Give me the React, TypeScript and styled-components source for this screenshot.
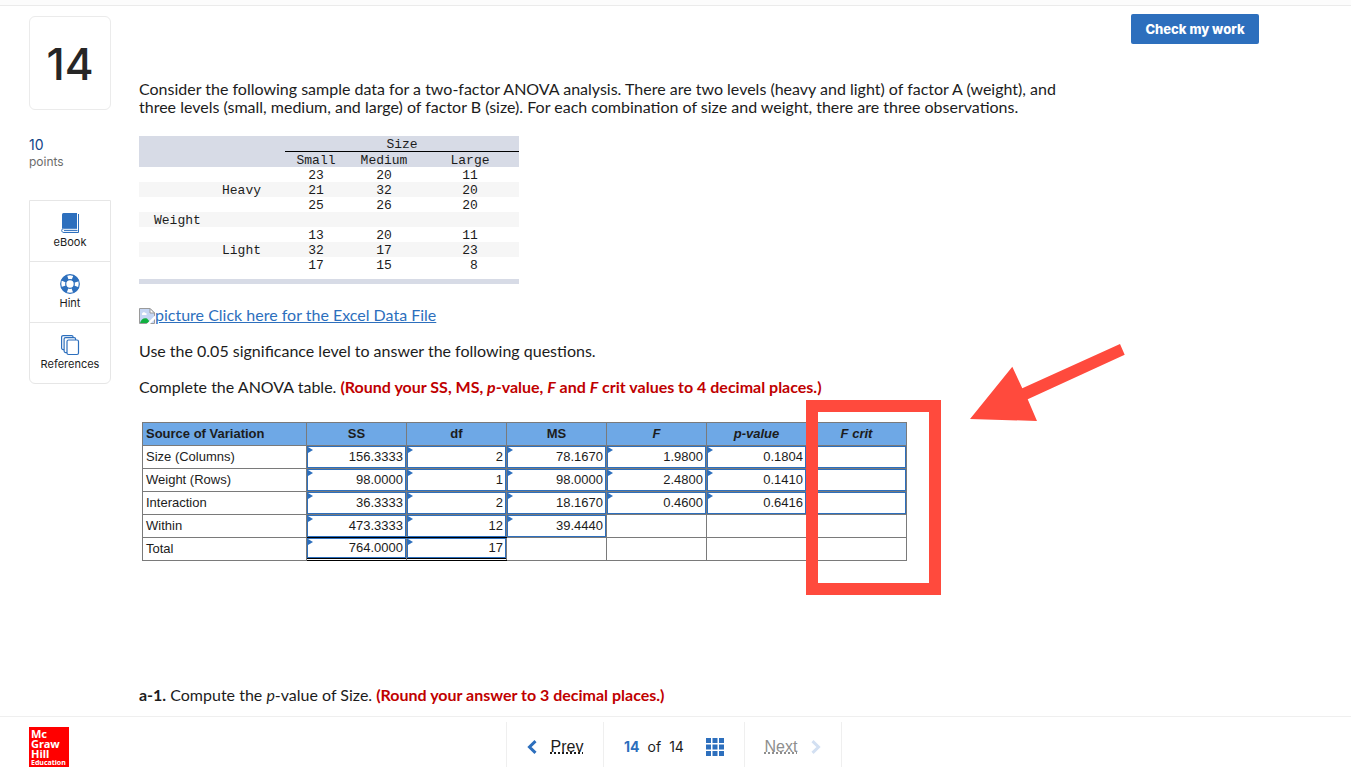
import React from 'react';
import styled, { createGlobalStyle, css } from 'styled-components';

const BLUE = '#2d6fbd';
const RED = '#ff4a3d';

const GlobalStyle = createGlobalStyle`
  *, *::before, *::after { box-sizing: border-box; }
  body {
    margin: 0;
    background: #fff;
    color: #1c1c1c;
    font-family: Inter, "Liberation Sans", sans-serif;
    font-size: 14px;
    line-height: 18px;
  }
`;

const Page = styled.div`
  display: flex;
  flex-direction: column;
  height: 100vh;
`;

const TopStrip = styled.header`
  flex: none;
  height: 6px;
  background: #fcfcfc;
  border-bottom: 1px solid #ebebeb;
`;

const Body = styled.div`
  flex: 1;
  min-height: 0;
  overflow: hidden;
  display: grid;
  grid-template-columns: 82px minmax(0, 1fr) auto;
  padding: 0 92px 0 29px;
`;

const Sidebar = styled.aside`
  padding-top: 10px;
`;

const QuestionNumber = styled.div`
  display: flex;
  align-items: center;
  justify-content: center;
  height: 94px;
  padding-top: 2px;
  border: 1px solid #ebebeb;
  border-radius: 6px;
  font-size: 44px;
  font-weight: 500;
  line-height: 46px;
  color: #262626;
`;

const Points = styled.div`
  margin-top: 26px;
  line-height: 17px;
  font-size: 12px;
  color: #6b6b6b;
`;

const PointsValue = styled.div`
  font-size: 14px;
  color: #114488;
`;

const ToolList = styled.nav`
  margin-top: 30px;
  border: 1px solid #e6e6e6;
  border-radius: 0 0 6px 6px;
`;

const ToolButton = styled.button`
  display: flex;
  flex-direction: column;
  align-items: center;
  gap: 1px;
  width: 100%;
  height: 60px;
  padding: 11px 0 0;
  border: 0;
  background: none;
  font: inherit;
  font-size: 11px;
  line-height: 14px;
  color: #1c1c1c;
  cursor: pointer;

  & + & {
    height: 61px;
    border-top: 1px solid #e6e6e6;
  }
  svg { display: block; }
`;

const Content = styled.main`
  padding: 74px 60px 0 28px;
`;

const Paragraph = styled.p`
  margin: 0 0 18px;
  font-family: Lato, "Liberation Sans", sans-serif;
  font-size: 16px;
`;

const Instruction = styled.b`
  color: #c00000;
`;

const FileLink = styled.a`
  color: ${BLUE};
  svg { vertical-align: -3px; }
`;

const DataTable = styled.table`
  width: 380px;
  margin: 20px 0 22px;
  table-layout: fixed;
  border-collapse: collapse;
  border-bottom: 5px solid #d7dbe6;
  font-family: "Liberation Mono", monospace;
  font-size: 13px;
  line-height: 13px;

  th, td { padding: 2px 0 0; font-weight: normal; text-align: center; height: 15px; }
  thead { background: #d7dbe6; }
  tbody tr:nth-child(even) { background: #f6f6f6; }
  tbody tr:last-child { background: none; }
`;

const Col = styled.col<{ $w: number }>`
  width: ${p => p.$w}px;
`;

const SizeHead = styled.th`
  border-bottom: 1px solid #000;
`;

const LabelCell = styled.th<{ $indent: number }>`
  && { text-align: left; padding-left: ${p => p.$indent}px; }
`;

const Num = styled.span`
  display: inline-block;
  width: 2ch;
  text-align: right;
`;

const TableEnd = styled.tr`
  && td { height: 9px; }
`;

const AnovaWrap = styled.div`
  position: relative;
  width: 765px;
  margin: 26px 0 125px 3px;
`;

const AnovaTable = styled.table`
  width: 100%;
  table-layout: fixed;
  border-collapse: collapse;
  font-family: "Liberation Sans", Arial, sans-serif;
  font-size: 13px;
  line-height: 22px;
  color: #1c1c1c;
`;

const HeadCell = styled.th<{ $left?: boolean; $italic?: boolean }>`
  height: 23px;
  padding: 0 3px;
  border: 1px solid #7a7a7a;
  background: #6ea8e6;
  text-align: ${p => (p.$left ? 'left' : 'center')};
  font-style: ${p => (p.$italic ? 'italic' : 'normal')};
`;

const RowLabel = styled.th`
  height: 23px;
  padding: 0 3px;
  border: 1px solid #7a7a7a;
  font-weight: normal;
  text-align: left;
`;

const Cell = styled.td<{ $total?: boolean; $last?: boolean }>`
  height: 23px;
  padding: 0;
  border: 1px solid #7a7a7a;
  vertical-align: top;
  ${p => p.$last && css`border-bottom-color: #000;`}
  ${p => p.$total && css`
    border-top-color: #000;
    border-bottom-color: #000;
  `}
`;

const Field = styled.div<{ $marked: boolean; $total?: boolean }>`
  position: relative;
  height: 22px;
  ${p => p.$total && css`
    height: 21px;
    border-bottom: 1px solid #000;
    margin-bottom: 1px;
  `}
  ${p => p.$marked && css`
    &::before {
      content: '';
      position: absolute;
      left: 1px;
      top: 1px;
      border-left: 5px solid ${BLUE};
      border-top: 3px solid transparent;
      border-bottom: 3px solid transparent;
    }
  `}
`;

const CellInput = styled.input`
  display: block;
  width: 100%;
  height: 100%;
  padding: 0 2px;
  border: 1px solid ${BLUE};
  border-radius: 0;
  outline: 0;
  background: #fff;
  font: inherit;
  line-height: 18px;
  text-align: right;
  color: inherit;
`;

const Highlight = styled.div`
  position: absolute;
  left: 664px;
  top: -22px;
  width: 135px;
  height: 195px;
  border: 12px solid ${RED};
  pointer-events: none;
`;

const Arrow = styled.svg`
  position: absolute;
  left: 828px;
  top: -78px;
  pointer-events: none;
`;

const CheckButton = styled.button`
  align-self: start;
  height: 30px;
  width: 128px;
  margin-top: 8px;
  padding: 0;
  border: 0;
  border-radius: 2px;
  background: ${BLUE};
  color: #fff;
  font: inherit;
  font-size: 13px;
  font-weight: 800;
  white-space: nowrap;
  cursor: pointer;
`;

const Footer = styled.footer`
  flex: none;
  display: grid;
  grid-template-columns: 1fr auto 1fr;
  height: 51px;
  padding: 0 32px 0 29px;
  border-top: 1px solid #efefef;
  background: #fff;
`;

const Logo = styled.div`
  align-self: end;
  width: 40px;
  height: 40px;
  padding: 2px 0 0 2px;
  background: #f00;
  color: #fff;
  font-family: "Noto Sans", sans-serif;
  font-size: 11px;
  font-weight: 700;
  line-height: 10px;
`;

const LogoSmall = styled.div`
  font-size: 7px;
  line-height: 8px;
`;

const Pager = styled.nav`
  display: flex;
  margin-top: 5px;
  border-left: 1px solid #efefef;
`;

const PagerGroup = styled.div<{ $w: number }>`
  display: flex;
  align-items: center;
  justify-content: center;
  width: ${p => p.$w}px;
  padding-top: 4px;
  border-right: 1px solid #efefef;
`;

const PagerButton = styled.button`
  display: flex;
  align-items: center;
  gap: 14px;
  padding: 0;
  border: 0;
  background: none;
  font: 16px/18px "Liberation Sans", Arial, sans-serif;
  color: #1c1c1c;
  cursor: pointer;

  &:disabled { color: #8e8e8e; }
  span {
    text-decoration: underline dotted 2px;
    text-underline-offset: 1px;
    text-decoration-skip-ink: none;
  }
`;

const Counter = styled.span`
  display: flex;
  gap: 8px;
  margin-right: 22px;
  b { color: ${BLUE}; }
`;

const GridButton = styled.button`
  padding: 0;
  border: 0;
  background: none;
  cursor: pointer;
  svg { display: block; }
`;

const BookIcon = () => (
  <svg width="20" height="22" viewBox="0 0 20 22" aria-hidden="true">
    <path d="M3.500 1H17v15H4c-1 0-2 .6-2 1.500V3c0-1.200.5-2 1.500-2z" fill={BLUE} />
    <path d="M18.500 2v18.500H4c-1.400 0-2.300-.8-2.300-2s.9-1.800 2.300-1.800h13" fill="none" stroke={BLUE} strokeWidth="1" />
    <path d="M4 18.600h13.500" stroke={BLUE} strokeWidth="1" />
  </svg>
);

const HintIcon = () => (
  <svg width="20" height="22" viewBox="0 0 20 22" aria-hidden="true">
    <circle cx="10" cy="11" r="9.300" fill="none" stroke={BLUE} strokeWidth="1.200" />
    <circle cx="10" cy="11" r="6.800" fill="none" stroke={BLUE} strokeWidth="5" strokeDasharray="5.900 4.780" strokeDashoffset="-2.390" />
    <circle cx="10" cy="11" r="4.300" fill="#fff" stroke={BLUE} strokeWidth="1.200" />
  </svg>
);

const ReferencesIcon = () => (
  <svg width="20" height="22" viewBox="0 0 20 22" aria-hidden="true" fill="#fff" stroke={BLUE} strokeWidth="1.200">
    <rect x="1.600" y="1.600" width="11.500" height="14" rx="1.500" />
    <rect x="4.100" y="3.600" width="11.500" height="15" rx="1.500" />
    <rect x="7" y="6" width="11.500" height="14.500" rx="1.500" />
  </svg>
);

const BrokenPicture = () => (
  <svg width="16" height="16" viewBox="0 0 16 16" aria-hidden="true">
    <path d="M.500.500H11L15.500 5v10.500H.500z" fill="#c5d6f4" stroke="#9a9a9a" />
    <path d="M11 .500V5h4.500z" fill="#fff" stroke="#9a9a9a" />
    <path d="M3 6c0-2 3-2.500 3.500-1C8 5 8 7 7 7H3.500C3 7 3 6.500 3 6z" fill="#fff" />
    <path d="M1 15c1-4 4-5.500 7-4.500L12 15z" fill="#10b040" />
    <path d="M16 7.500 7.500 16H11l5-5z" fill="#fff" />
  </svg>
);

const Chevron = ({ right }: { right?: boolean }) => (
  <svg width="10" height="14" viewBox="0 0 10 14" aria-hidden="true">
    <path
      d={right ? 'M1.500 1.200 7.500 7 1.500 12.800' : 'M8.500 1.200 2.500 7 8.500 12.800'}
      fill="none"
      stroke={right ? '#d3e0f2' : BLUE}
      strokeWidth="3"
    />
  </svg>
);

const GridIcon = () => (
  <svg width="18" height="18" viewBox="0 0 18 18" aria-hidden="true" fill={BLUE}>
    {[0, 6.5, 13].map(y => [0, 6.5, 13].map(x => <rect key={`${x}-${y}`} x={x} y={y} width="5" height="5" />))}
  </svg>
);

const sample: [string, string, number[]][] = [
  ['', '', [23, 20, 11]],
  ['', 'Heavy', [21, 32, 20]],
  ['', '', [25, 26, 20]],
  ['Weight', '', []],
  ['', '', [13, 20, 11]],
  ['', 'Light', [32, 17, 23]],
  ['', '', [17, 15, 8]],
];

const columns = ['SS', 'df', 'MS', 'F', 'p-value', 'F crit'];

// null marks a cell that takes no answer; an empty string is an unanswered field
const anova: [string, (string | null)[]][] = [
  ['Size (Columns)', ['156.3333', '2', '78.1670', '1.9800', '0.1804', '']],
  ['Weight (Rows)', ['98.0000', '1', '98.0000', '2.4800', '0.1410', '']],
  ['Interaction', ['36.3333', '2', '18.1670', '0.4600', '0.6416', '']],
  ['Within', ['473.3333', '12', '39.4440', null, null, null]],
  ['Total', ['764.0000', '17', null, null, null, null]],
];

const SampleData = () => (
  <DataTable>
    <colgroup>
      {[76, 70, 62, 74, 98].map((w, i) => <Col key={i} $w={w} />)}
    </colgroup>
    <thead>
      <tr><td colSpan={2} /><SizeHead colSpan={3}>Size</SizeHead></tr>
      <tr><td colSpan={2} /><th>Small</th><th>Medium</th><th>Large</th></tr>
    </thead>
    <tbody>
      {sample.map(([group, level, values], i) => (
        <tr key={i}>
          <LabelCell $indent={15}>{group}</LabelCell>
          <LabelCell $indent={7}>{level}</LabelCell>
          {[0, 1, 2].map(c => <td key={c}>{values[c] !== undefined && <Num>{values[c]}</Num>}</td>)}
        </tr>
      ))}
      <TableEnd><td colSpan={5} /></TableEnd>
    </tbody>
  </DataTable>
);

const Anova = () => (
  <AnovaWrap>
    <AnovaTable>
      <colgroup>
        <Col $w={164} />
        {columns.map(c => <Col key={c} $w={100} />)}
      </colgroup>
      <thead>
        <tr>
          <HeadCell $left>Source of Variation</HeadCell>
          {columns.map((c, i) => <HeadCell key={c} $italic={i > 2}>{c}</HeadCell>)}
        </tr>
      </thead>
      <tbody>
        {anova.map(([label, values]) => (
          <tr key={label}>
            <RowLabel scope="row">{label}</RowLabel>
            {values.map((v, i) => {
              const total = label === 'Total' && v !== null;
              return (
                <Cell key={i} $total={total} $last={label === 'Within' && i < 2}>
                  {v !== null && (
                    <Field $marked={v !== ''} $total={total}>
                      <CellInput type="text" defaultValue={v} aria-label={`${label} ${columns[i]}`} />
                    </Field>
                  )}
                </Cell>
              );
            })}
          </tr>
        ))}
      </tbody>
    </AnovaTable>
    <Highlight />
    <Arrow width="156" height="78" viewBox="0 0 156 78" aria-hidden="true">
      <path d="M0 75 42.300 22.700 52.300 44.300 150 0l4.700 10.700L57.700 55.300 67 77z" fill={RED} />
    </Arrow>
  </AnovaWrap>
);

export default function App() {
  return (
    <Page>
      <GlobalStyle />
      <TopStrip />
      <Body>
        <Sidebar>
          <QuestionNumber>14</QuestionNumber>
          <Points><PointsValue>10</PointsValue>points</Points>
          <ToolList aria-label="Resources">
            <ToolButton><BookIcon />eBook</ToolButton>
            <ToolButton><HintIcon />Hint</ToolButton>
            <ToolButton><ReferencesIcon />References</ToolButton>
          </ToolList>
        </Sidebar>
        <Content>
          <Paragraph>
            Consider the following sample data for a two-factor ANOVA analysis. There are two levels (heavy and light) of
            factor A (weight), and three levels (small, medium, and large) of factor B (size). For each combination of size
            and weight, there are three observations.
          </Paragraph>
          <SampleData />
          <Paragraph>
            <FileLink href="#data"><BrokenPicture />picture Click here for the Excel Data File</FileLink>
          </Paragraph>
          <Paragraph>Use the 0.05 significance level to answer the following questions.</Paragraph>
          <Paragraph>
            Complete the ANOVA table.{' '}
            <Instruction>
              (Round your SS, MS, <i>p</i>-value, <i>F</i> and <i>F</i> crit values to 4 decimal places.)
            </Instruction>
          </Paragraph>
          <Anova />
          <Paragraph>
            <b>a-1.</b> Compute the <i>p</i>-value of Size. <Instruction>(Round your answer to 3 decimal places.)</Instruction>
          </Paragraph>
        </Content>
        <CheckButton>Check my work</CheckButton>
      </Body>
      <Footer>
        <Logo>Mc<br />Graw<br />Hill<LogoSmall>Education</LogoSmall></Logo>
        <Pager aria-label="Questions">
          <PagerGroup $w={97}><PagerButton><Chevron /><span>Prev</span></PagerButton></PagerGroup>
          <PagerGroup $w={141}>
            <Counter><b>14</b> of <span>14</span></Counter>
            <GridButton aria-label="All questions"><GridIcon /></GridButton>
          </PagerGroup>
          <PagerGroup $w={97}><PagerButton disabled><span>Next</span><Chevron right /></PagerButton></PagerGroup>
        </Pager>
      </Footer>
    </Page>
  );
}
